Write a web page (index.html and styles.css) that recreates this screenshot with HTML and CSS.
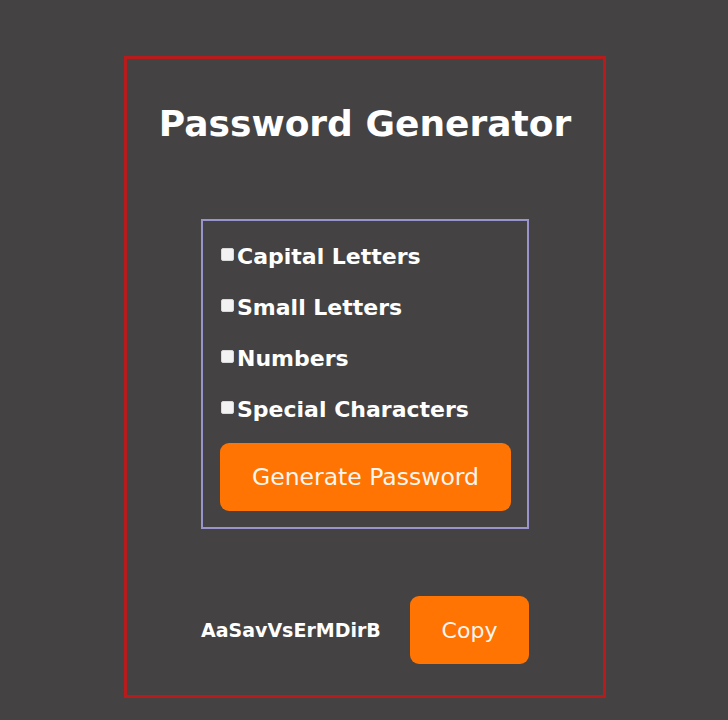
FILE: index.html
```html
<!DOCTYPE html>
<html lang="en">
<head>
<meta charset="utf-8">
<title>Password Generator</title>
<link rel="stylesheet" href="styles.css">
</head>
<body>
<main class="card">
  <h1 class="title">Password Generator</h1>
  <section class="options">
    <label class="option"><input type="checkbox" class="check"><span>Capital Letters</span></label>
    <label class="option"><input type="checkbox" class="check"><span>Small Letters</span></label>
    <label class="option"><input type="checkbox" class="check"><span>Numbers</span></label>
    <label class="option"><input type="checkbox" class="check"><span>Special Characters</span></label>
    <button class="btn btn-generate" type="button">Generate Password</button>
  </section>
  <div class="result">
    <span class="password">AaSavVsErMDirB</span>
    <button class="btn btn-copy" type="button">Copy</button>
  </div>
</main>
</body>
</html>
```
FILE: styles.css
```css
html, body {
  margin: 0;
  padding: 0;
  background: #444242;
}
body {
  font-family: "Comic Sans MS", "DejaVu Sans", sans-serif;
  color: #ffffff;
  padding-top: 56px;
}
.card {
  box-sizing: border-box;
  width: 482px;
  height: 642px;
  margin: 0 0 0 calc(50% - 240px);
  border: 3px solid #b81b1b;
  display: flex;
  flex-direction: column;
  align-items: center;
}
.title {
  margin: 42px 0 0;
  height: 46px;
  font-size: 36px;
  line-height: 46px;
  font-weight: bold;
}
.options {
  box-sizing: border-box;
  width: 328px;
  height: 310px;
  margin-top: 72px;
  border: 2px solid #9a94cc;
  padding: 10px 16px 16px 17px;
  display: flex;
  flex-direction: column;
}
.option {
  height: 51px;
  display: flex;
  align-items: center;
  font-size: 22px;
  font-weight: bold;
}
.check {
  appearance: none;
  -webkit-appearance: none;
  box-sizing: border-box;
  width: 13px;
  height: 13px;
  margin: -4px 3px 0 1px;
  background: #f2f2f2;
  border: 1px solid #d8d8d8;
  border-radius: 2px;
}
.btn {
  border: none;
  background: #ff7403;
  color: #fbf6f0;
  font-family: "Comic Sans MS", "DejaVu Sans", sans-serif;
  border-radius: 9px;
}
.btn-generate {
  margin-top: 8px;
  height: 68px;
  width: 291px;
  font-size: 23.5px;
}
.result {
  width: 328px;
  margin-top: 67px;
  display: flex;
  align-items: center;
  justify-content: space-between;
}
.password {
  font-size: 19px;
  font-weight: bold;
}
.btn-copy {
  width: 119px;
  height: 68px;
  font-size: 22px;
}
```
